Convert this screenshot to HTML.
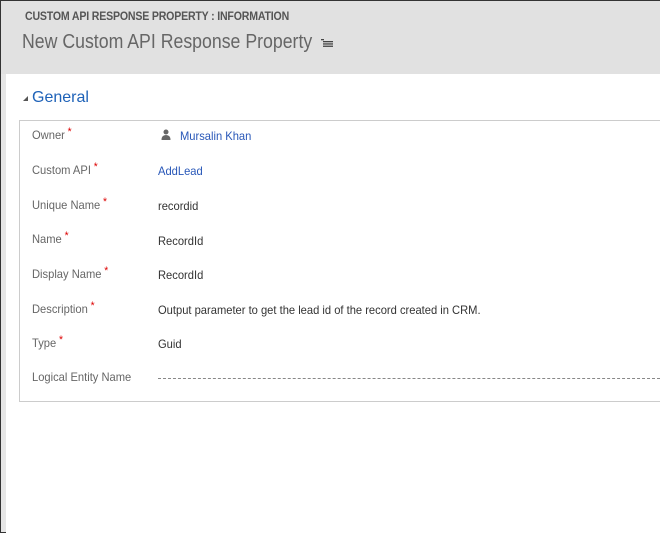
<!DOCTYPE html>
<html><head><meta charset="utf-8"><style>
*{margin:0;padding:0;box-sizing:border-box}
body{width:660px;height:533px;overflow:hidden;font-family:"Liberation Sans",sans-serif;background:#fff}
.frame{position:absolute;left:0;top:0;width:660px;height:533px;border:1px solid #333;border-right:none;background:#e6e6e6}
.top{position:absolute;left:0;top:0;width:660px;height:74px;background:#e1e1e1;border-top:1px solid #333;border-left:1px solid #333}
.t1{position:absolute;left:24px;top:10px;font-size:11.5px;font-weight:bold;color:#555;letter-spacing:-0.2px;transform:scaleX(0.92);transform-origin:left}
.t2{position:absolute;left:21px;top:30px;font-size:20px;color:#666;transform:scaleX(0.885);transform-origin:left}
.menu{position:absolute;left:320px;top:38px}
.panel{position:absolute;left:6px;top:74px;width:660px;height:460px;background:#fff}
.gen{position:absolute;left:22px;top:89px;font-size:16px;color:#1e62b8}
.tri{position:absolute;left:23px;top:96px;width:0;height:0;border-left:5px solid transparent;border-bottom:5px solid #555}
.gen span{margin-left:10px}
.box{position:absolute;left:19px;top:120px;width:660px;height:282px;border:1px solid #ccc;border-right:none}
.row{position:absolute;left:32px;font-size:12px;color:#666;transform:scaleX(0.93);transform-origin:left}
.row b{color:#d00;font-weight:normal;position:relative;top:-4px;margin-left:3px;font-size:11px}
.val{position:absolute;left:158px;font-size:12px;color:#333;transform:scaleX(0.93);transform-origin:left}
.link{color:#2857b8}
.dash{position:absolute;left:158px;top:378px;width:502px;border-top:1px dashed #888}
</style></head><body>
<div class="frame"></div>
<div class="top">
<div class="t1">CUSTOM API RESPONSE PROPERTY : INFORMATION</div>
<div class="t2">New Custom API Response Property</div>
<svg class="menu" width="12" height="8" viewBox="0 0 12 8"><rect x="0" y="0" width="3" height="1.3" fill="#444"/><rect x="2" y="2" width="10" height="1.3" fill="#444"/><rect x="2" y="4.3" width="10" height="1.3" fill="#444"/><rect x="2" y="6.6" width="10" height="1.3" fill="#444"/></svg>
</div>
<div class="panel"></div>
<div class="tri"></div>
<div class="gen"><span>General</span></div>
<div class="box"></div>
<div class="row" style="top:128px">Owner<b>*</b></div>
<svg style="position:absolute;left:161px;top:129px" width="10" height="11" viewBox="0 0 10 11"><circle cx="5" cy="3" r="2.5" fill="#666"/><path d="M0.5 11 Q0.5 6 5 6 Q9.5 6 9.5 11Z" fill="#666"/></svg>
<div class="val link" style="top:129px;left:180px">Mursalin Khan</div>
<div class="row" style="top:163px">Custom API<b>*</b></div>
<div class="val link" style="top:164px">AddLead</div>
<div class="row" style="top:198px">Unique Name<b>*</b></div>
<div class="val" style="top:199px">recordid</div>
<div class="row" style="top:232px">Name<b>*</b></div>
<div class="val" style="top:234px">RecordId</div>
<div class="row" style="top:267px">Display Name<b>*</b></div>
<div class="val" style="top:268px">RecordId</div>
<div class="row" style="top:302px">Description<b>*</b></div>
<div class="val" style="top:303px">Output parameter to get the lead id of the record created in CRM.</div>
<div class="row" style="top:336px">Type<b>*</b></div>
<div class="val" style="top:337px">Guid</div>
<div class="row" style="top:370px">Logical Entity Name</div>
<div class="dash"></div>
</body></html>
